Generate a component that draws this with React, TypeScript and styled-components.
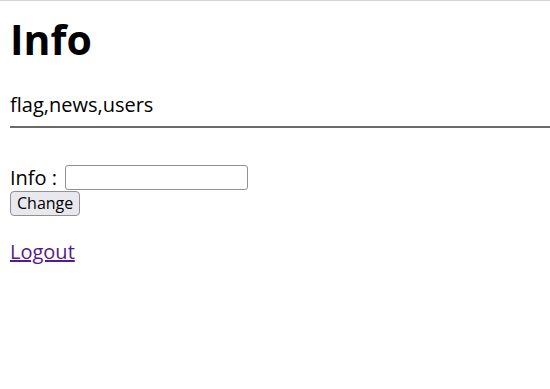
import React, { useState } from "react";
import styled, { createGlobalStyle } from "styled-components";

const GlobalStyle = createGlobalStyle`
  html, body {
    margin: 0;
    padding: 0;
    background: #fff;
  }
  body {
    font-family: "Open Sans", "Noto Sans", sans-serif;
    color: #000;
  }
`;

const Page = styled.div`
  border-top: 1px solid #d4d4d4;
  padding: 0 0 0 10px;
  display: flex;
  flex-direction: column;
`;

const Title = styled.h1`
  font-size: 41px;
  font-weight: 700;
  line-height: 48px;
  margin: 14px 0 0;
`;

const Tables = styled.div`
  font-size: 20px;
  line-height: 27px;
  margin-top: 28px;
`;

const Rule = styled.hr`
  margin: 8px 0 0;
  border: none;
  border-top: 2px solid #6b6b6b;
  width: 100%;
`;

const Form = styled.form`
  display: flex;
  flex-direction: column;
  align-items: flex-start;
  margin-top: 36px;
`;

const Row = styled.div`
  display: flex;
  align-items: flex-end;
  gap: 8px;
`;

const Label = styled.label`
  font-size: 20px;
  line-height: 27px;
`;

const TextInput = styled.input`
  width: 183px;
  height: 25px;
  box-sizing: border-box;
  border: 1px solid #8f8f9d;
  border-radius: 3px;
  margin-bottom: 1px;
  padding: 1px 3px;
  font-size: 16px;
`;

const Button = styled.button`
  margin-top: 0;
  height: 25px;
  box-sizing: border-box;
  padding: 0 6px;
  font-family: "Open Sans", "Noto Sans", sans-serif;
  font-size: 16px;
  line-height: 21px;
  color: #000;
  background: #e9e9ed;
  border: 1px solid #8f8f9d;
  border-radius: 4px;
`;

const Footer = styled.p`
  margin: 22px 0 0;
  font-size: 20px;
  line-height: 27px;
`;

const Link = styled.a`
  color: #551a8b;
  text-decoration: underline;
`;

export default function App() {
  const [info, setInfo] = useState("");

  return (
    <Page>
      <GlobalStyle />
      <Title>Info</Title>
      <Tables>flag,news,users</Tables>
      <Rule />
      <Form onSubmit={(e) => e.preventDefault()}>
        <Row>
          <Label htmlFor="info">Info :</Label>
          <TextInput id="info" value={info} onChange={(e) => setInfo(e.target.value)} />
        </Row>
        <Button type="submit">Change</Button>
      </Form>
      <Footer>
        <Link href="#">Logout</Link>
      </Footer>
    </Page>
  );
}
